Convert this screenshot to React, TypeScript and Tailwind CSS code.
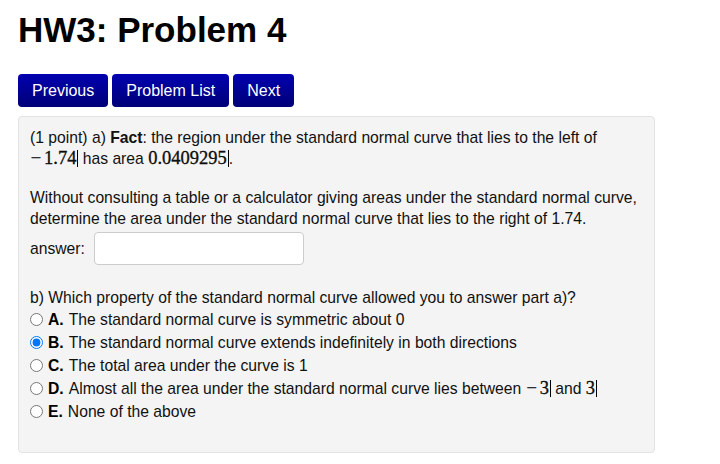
const options = [
  { key: 'A', text: 'The standard normal curve is symmetric about 0' },
  { key: 'B', text: 'The standard normal curve extends indefinitely in both directions' },
  { key: 'C', text: 'The total area under the curve is 1' },
  { key: 'D', text: 'Almost all the area under the standard normal curve lies between', math: true },
  { key: 'E', text: 'None of the above' },
]

function M({ children, neg }: { children: React.ReactNode; neg?: boolean }) {
  return (
    <span className="inline-flex items-center font-['Liberation_Serif',serif] text-[18.5px] leading-[20px] [-webkit-text-stroke:0.3px_black]">
      {neg && <span className="mr-[2px] inline-block w-[12px] text-center">−</span>}
      {children}
      <span className="ml-px inline-block h-[17px] w-px bg-black" />
    </span>
  )
}

function NavButton({ label }: { label: string }) {
  return (
    <button className="h-[33px] rounded-[4px] bg-gradient-to-b from-[#0000b0] to-[#000078] px-[14px] text-[16px] text-white">
      {label}
    </button>
  )
}

export default function App() {
  return (
    <div className="min-h-[464px] bg-white px-[18px] pt-[11px] font-['Liberation_Sans',Arial,sans-serif] text-[#111]">
      <h1 className="text-[35px] font-bold leading-[38px] text-black">HW3: Problem 4</h1>
      <div className="mt-[25px] flex gap-[4px]">
        <NavButton label="Previous" />
        <NavButton label="Problem List" />
        <NavButton label="Next" />
      </div>
      <div className="mt-[9px] w-[637px] rounded-[4px] border border-[#e3e3e3] bg-[#f4f4f4] px-[11px] pb-[29px] pt-[10px] text-[15.7px] leading-[21px]">
        <p>
          (1 point) a) <b>Fact</b>: the region under the standard normal curve that lies to the left of
          <br />
          <M neg>1.74</M> has area <M>0.0409295</M>.
        </p>
        <p className="mt-[18px]">
          Without consulting a table or a calculator giving areas under the standard normal curve,
          determine the area under the standard normal curve that lies to the right of 1.74.
        </p>
        <div className="mt-[3px] flex items-center gap-[9px]">
          <span>answer:</span>
          <input className="h-[33px] w-[210px] rounded-[4px] border border-[#cccccc] bg-white px-2" />
        </div>
        <p className="mt-[22px]">b) Which property of the standard normal curve allowed you to answer part a)?</p>
        <div className="flex flex-col">
          {options.map((o) => (
            <label key={o.key} className="flex h-[23px] items-center">
              <input
                type="radio"
                name="q"
                defaultChecked={o.key === 'B'}
                className="m-0 mr-[5px] h-[13px] w-[13px]"
              />
              <b className="text-black">{o.key}.</b>
              <span className="ml-[5px]">
                {o.text}
                {o.math && (
                  <>
                    {' '}
                    <M neg>3</M> and <M>3</M>
                  </>
                )}
              </span>
            </label>
          ))}
        </div>
      </div>
    </div>
  )
}
